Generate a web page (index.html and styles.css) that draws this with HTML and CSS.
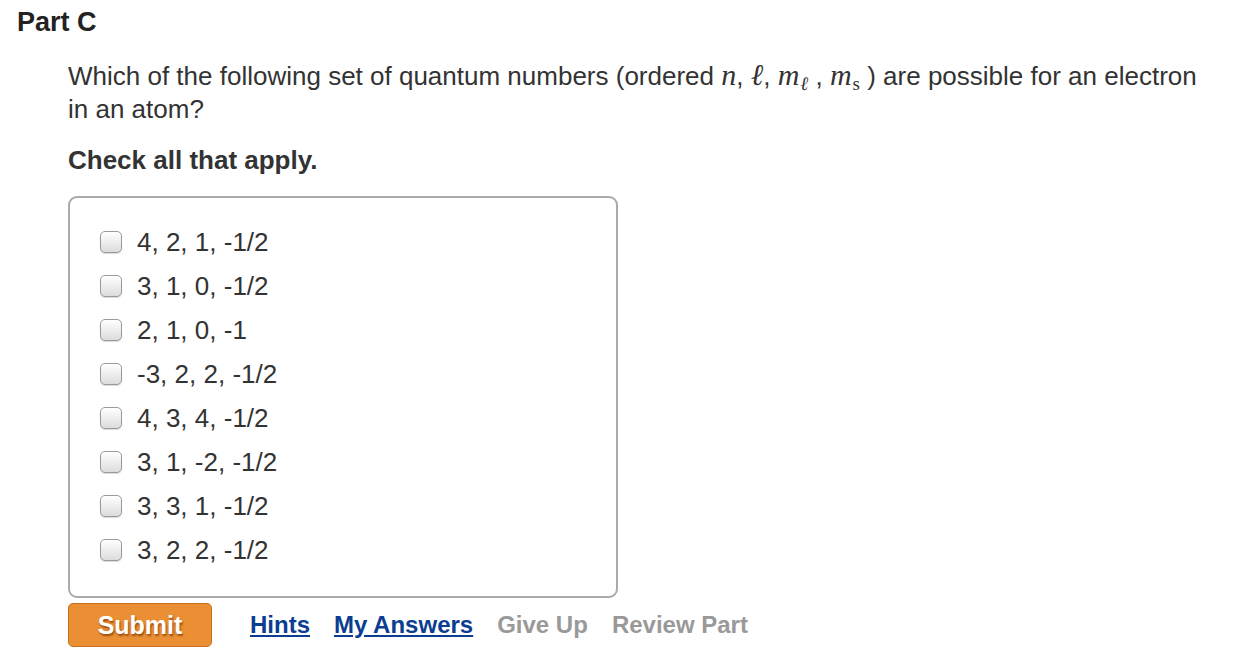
FILE: index.html
```html
<!DOCTYPE html>
<html lang="en">
<head>
  <meta charset="UTF-8">
  <title>Part C</title>
  <link rel="stylesheet" href="styles.css">
</head>
<body>
  <h2 class="part-title">Part C</h2>

  <div class="question">
    <p class="prompt">Which of the following set of quantum numbers (ordered <span class="math">n</span>, <span class="math">ℓ</span>, <span class="math">m<span class="sub">ℓ</span></span> , <span class="math">m<span class="sub up">s</span></span> ) are possible for an electron in an atom?</p>

    <p class="instruction">Check all that apply.</p>

    <div class="answer-box">
      <label class="option"><input type="checkbox"> 4, 2, 1, -1/2</label>
      <label class="option"><input type="checkbox"> 3, 1, 0, -1/2</label>
      <label class="option"><input type="checkbox"> 2, 1, 0, -1</label>
      <label class="option"><input type="checkbox"> -3, 2, 2, -1/2</label>
      <label class="option"><input type="checkbox"> 4, 3, 4, -1/2</label>
      <label class="option"><input type="checkbox"> 3, 1, -2, -1/2</label>
      <label class="option"><input type="checkbox"> 3, 3, 1, -1/2</label>
      <label class="option"><input type="checkbox"> 3, 2, 2, -1/2</label>
    </div>

    <div class="actions">
      <button class="submit">Submit</button>
      <a href="#" class="link">Hints</a>
      <a href="#" class="link">My Answers</a>
      <span class="disabled">Give Up</span>
      <span class="disabled">Review Part</span>
    </div>
  </div>
</body>
</html>
```

FILE: styles.css
```css
body {
  font-family: "Liberation Sans", Arial, sans-serif;
  margin: 0;
  padding: 0;
  background-color: #fff;
  color: #333;
}
.part-title {
  margin: 0;
  padding: 7px 0 0 17px;
  font-size: 27px;
  line-height: 30px;
  font-weight: bold;
  color: #222;
}
.question {
  padding-left: 68px;
}
.prompt {
  margin: 23px 0 0 0;
  font-size: 26px;
  line-height: 33px;
  max-width: 1145px;
}
.math {
  font-family: "Liberation Serif", "Times New Roman", serif;
  font-style: italic;
  font-size: 30px;
  line-height: 1;
}
.math .sub {
  display: inline-block;
  font-size: 19px;
  line-height: 1;
  transform: translateY(5px);
  margin-left: 1px;
}
.math .sub.up {
  font-style: normal;
}
.instruction {
  margin: 18px 0 0 0;
  font-size: 26px;
  line-height: 33px;
  font-weight: bold;
}
.answer-box {
  margin-top: 19px;
  width: 550px;
  height: 402px;
  border: 2px solid #aaa;
  border-radius: 9px;
  padding: 22px 0 23px 30px;
  box-sizing: border-box;
}
.option {
  display: flex;
  align-items: center;
  height: 44px;
  font-size: 26px;
}
.option input {
  appearance: none;
  -webkit-appearance: none;
  width: 22px;
  height: 22px;
  margin: 0 15px 0 0;
  border: 1px solid #999;
  border-radius: 5px;
  background: linear-gradient(#fff, #dcdcdc);
  box-shadow: 0 1px 1px rgba(0,0,0,0.15);
}
.actions {
  display: flex;
  align-items: center;
  margin-top: 5px;
  font-size: 24px;
  font-weight: bold;
}
.submit {
  width: 144px;
  height: 44px;
  background-color: #ea8f34;
  border: 1px solid #c86f1e;
  border-radius: 5px;
  color: white;
  font-family: inherit;
  font-size: 25px;
  font-weight: bold;
  text-shadow: 1px 2px 2px rgba(120,50,0,0.7);
  margin-right: 38px;
}
.link {
  color: #0b3d91;
  text-decoration: underline;
  margin-right: 24px;
}
.disabled {
  color: #999;
  margin-right: 24px;
}
```
